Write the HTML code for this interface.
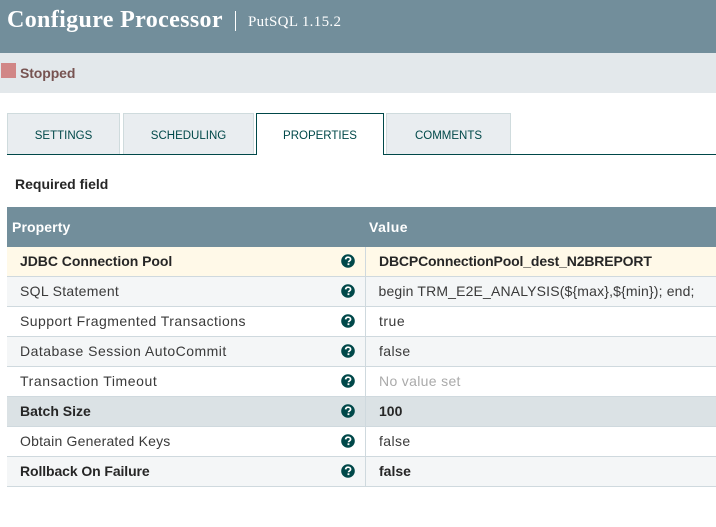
<!DOCTYPE html>
<html><head><meta charset="utf-8"><style>
html,body{margin:0;padding:0;width:716px;height:527px;overflow:hidden;background:#fff;font-family:"Liberation Sans",sans-serif}
div{position:absolute;box-sizing:border-box;white-space:nowrap}
.tab{top:113px;height:41px;background:#e9edf0;border:1px solid #cfdbdd;border-bottom:0;color:#004849;font-size:11.5px;line-height:44px;text-align:center}
.row{left:7px;width:709px;height:30px;border-bottom:1px solid #cfd9de;font-size:14px;line-height:28px;color:#3a3a3a}
.n{left:13px;top:0}
.v{left:372px;top:0}
.b{font-weight:bold;color:#262626}
.sep{left:358px;top:0;width:1px;height:30px;background:#cfd9de}
svg{position:absolute;left:334px;top:7px}
</style></head><body>
<div style="left:0;top:0;width:716px;height:53px;background:#728e9b"></div>
<div style="left:7px;top:5px;color:#fff;font:bold 24px/30px 'Liberation Serif',serif;letter-spacing:.36px">Configure Processor</div>
<div style="left:235px;top:11px;width:1px;height:20px;background:#fff"></div>
<div style="left:248px;top:12px;color:#fff;font:15px/20px 'Liberation Serif',serif;letter-spacing:.33px">PutSQL 1.15.2</div>
<div style="left:0;top:53px;width:716px;height:40px;background:#e3e8eb"></div>
<div style="left:1px;top:63px;width:15px;height:15px;background:#d18686"></div>
<div style="left:20px;top:64px;color:#775351;font-size:14px;line-height:18px;font-weight:bold;letter-spacing:-.1px">Stopped</div>
<div style="left:7px;top:154px;width:709px;height:1px;background:#004849"></div>
<div class="tab" style="left:7px;width:113px">SETTINGS</div>
<div class="tab" style="left:123px;width:131px">SCHEDULING</div>
<div class="tab" style="left:256px;width:128px;height:42px;background:#fff;border:1px solid #004849;border-bottom:0;line-height:44px;color:#004849">PROPERTIES</div>
<div class="tab" style="left:386px;width:125px">COMMENTS</div>
<div style="left:15px;top:175px;color:#262626;font-size:14px;line-height:18px;font-weight:bold">Required field</div>
<div style="left:7px;top:207px;width:709px;height:40px;background:#728e9b"></div>
<div style="left:12px;top:218px;color:#fff;font-size:14px;line-height:18px;font-weight:bold;letter-spacing:.1px">Property</div>
<div style="left:369px;top:218px;color:#fff;font-size:14px;line-height:18px;font-weight:bold;letter-spacing:.5px">Value</div>

<div class="row b" style="top:247px;background:#fff9e8"><div class="n" style="letter-spacing:-.05px">JDBC Connection Pool</div><svg width="14" height="14" viewBox="0 0 14 14"><circle cx="7" cy="7" r="6.8" fill="#004849"/><path d="M4.6 5.4C4.8 3.9 6 3.2 7.1 3.2c1.4 0 2.5.9 2.5 2 0 1.8-2.1 1.7-2.1 3.1" fill="none" stroke="#fff" stroke-width="1.7"/><rect x="6.5" y="9.3" width="1.9" height="1.8" fill="#fff"/></svg><div class="sep"></div><div class="v" style="letter-spacing:-.15px">DBCPConnectionPool_dest_N2BREPORT</div></div>
<div class="row" style="top:277px;background:#f4f6f7"><div class="n" style="letter-spacing:.3px">SQL Statement</div><svg width="14" height="14" viewBox="0 0 14 14"><circle cx="7" cy="7" r="6.8" fill="#004849"/><path d="M4.6 5.4C4.8 3.9 6 3.2 7.1 3.2c1.4 0 2.5.9 2.5 2 0 1.8-2.1 1.7-2.1 3.1" fill="none" stroke="#fff" stroke-width="1.7"/><rect x="6.5" y="9.3" width="1.9" height="1.8" fill="#fff"/></svg><div class="sep"></div><div class="v" style="left:371.5px;letter-spacing:.16px">begin TRM_E2E_ANALYSIS(${max},${min}); end;</div></div>
<div class="row" style="top:307px"><div class="n" style="letter-spacing:.46px">Support Fragmented Transactions</div><svg width="14" height="14" viewBox="0 0 14 14"><circle cx="7" cy="7" r="6.8" fill="#004849"/><path d="M4.6 5.4C4.8 3.9 6 3.2 7.1 3.2c1.4 0 2.5.9 2.5 2 0 1.8-2.1 1.7-2.1 3.1" fill="none" stroke="#fff" stroke-width="1.7"/><rect x="6.5" y="9.3" width="1.9" height="1.8" fill="#fff"/></svg><div class="sep"></div><div class="v" style="letter-spacing:.5px">true</div></div>
<div class="row" style="top:337px;background:#f4f6f7"><div class="n" style="letter-spacing:.48px">Database Session AutoCommit</div><svg width="14" height="14" viewBox="0 0 14 14"><circle cx="7" cy="7" r="6.8" fill="#004849"/><path d="M4.6 5.4C4.8 3.9 6 3.2 7.1 3.2c1.4 0 2.5.9 2.5 2 0 1.8-2.1 1.7-2.1 3.1" fill="none" stroke="#fff" stroke-width="1.7"/><rect x="6.5" y="9.3" width="1.9" height="1.8" fill="#fff"/></svg><div class="sep"></div><div class="v" style="letter-spacing:.4px">false</div></div>
<div class="row" style="top:367px"><div class="n" style="letter-spacing:.58px">Transaction Timeout</div><svg width="14" height="14" viewBox="0 0 14 14"><circle cx="7" cy="7" r="6.8" fill="#004849"/><path d="M4.6 5.4C4.8 3.9 6 3.2 7.1 3.2c1.4 0 2.5.9 2.5 2 0 1.8-2.1 1.7-2.1 3.1" fill="none" stroke="#fff" stroke-width="1.7"/><rect x="6.5" y="9.3" width="1.9" height="1.8" fill="#fff"/></svg><div class="sep"></div><div class="v" style="color:#aaa;letter-spacing:.33px">No value set</div></div>
<div class="row b" style="top:397px;background:#dbe2e5"><div class="n">Batch Size</div><svg width="14" height="14" viewBox="0 0 14 14"><circle cx="7" cy="7" r="6.8" fill="#004849"/><path d="M4.6 5.4C4.8 3.9 6 3.2 7.1 3.2c1.4 0 2.5.9 2.5 2 0 1.8-2.1 1.7-2.1 3.1" fill="none" stroke="#fff" stroke-width="1.7"/><rect x="6.5" y="9.3" width="1.9" height="1.8" fill="#fff"/></svg><div class="sep"></div><div class="v">100</div></div>
<div class="row" style="top:427px"><div class="n" style="letter-spacing:.2px">Obtain Generated Keys</div><svg width="14" height="14" viewBox="0 0 14 14"><circle cx="7" cy="7" r="6.8" fill="#004849"/><path d="M4.6 5.4C4.8 3.9 6 3.2 7.1 3.2c1.4 0 2.5.9 2.5 2 0 1.8-2.1 1.7-2.1 3.1" fill="none" stroke="#fff" stroke-width="1.7"/><rect x="6.5" y="9.3" width="1.9" height="1.8" fill="#fff"/></svg><div class="sep"></div><div class="v" style="letter-spacing:.4px">false</div></div>
<div class="row b" style="top:457px;background:#f4f6f7"><div class="n" style="letter-spacing:-.1px">Rollback On Failure</div><svg width="14" height="14" viewBox="0 0 14 14"><circle cx="7" cy="7" r="6.8" fill="#004849"/><path d="M4.6 5.4C4.8 3.9 6 3.2 7.1 3.2c1.4 0 2.5.9 2.5 2 0 1.8-2.1 1.7-2.1 3.1" fill="none" stroke="#fff" stroke-width="1.7"/><rect x="6.5" y="9.3" width="1.9" height="1.8" fill="#fff"/></svg><div class="sep"></div><div class="v">false</div></div>
</body></html>
